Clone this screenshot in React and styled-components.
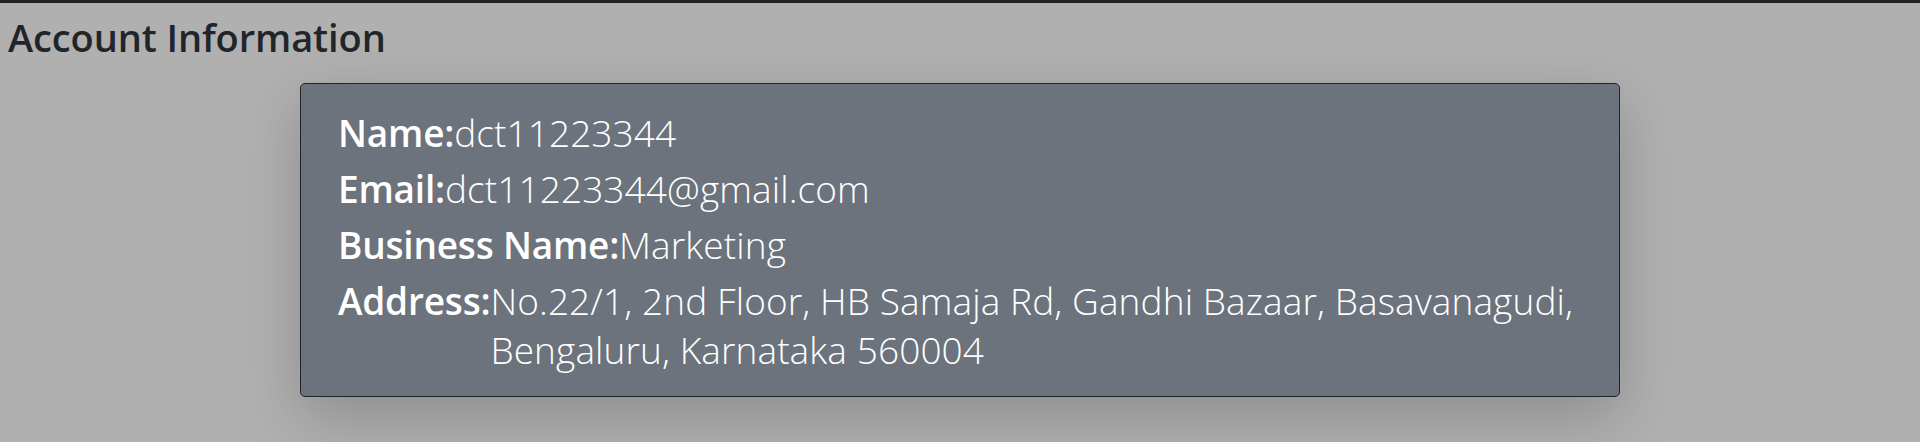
import styled, { createGlobalStyle } from "styled-components";

const GlobalStyle = createGlobalStyle`
  html, body {
    margin: 0;
    padding: 0;
    background: #b0b0b0;
    font-family: "Open Sans", "Noto Sans", sans-serif;
  }
`;

const Page = styled.div`
  min-height: 442px;
  background: #b0b0b0;
`;

const TopBar = styled.div`
  height: 3px;
  background: #212529;
`;

const Title = styled.h2`
  margin: 10px 0 0;
  padding-left: 8px;
  font-size: 38px;
  font-weight: 600;
  line-height: 48px;
  color: #212529;
  letter-spacing: -0.1px;
`;

const Card = styled.div`
  box-sizing: border-box;
  width: 1320px;
  margin: 22px auto 0;
  padding: 24px 37px 22px;
  background: #6c737c;
  border: 1px solid #212529;
  border-radius: 5px;
  box-shadow: 0 20px 60px rgba(0, 0, 0, 0.2);
  color: #fff;
`;

const Row = styled.div`
  display: flex;
  font-size: 37px;
  line-height: 49px;
  margin-bottom: 7px;

  &:last-child {
    margin-bottom: 0;
  }
`;

const Label = styled.span`
  flex: none;
  font-weight: 600;
  letter-spacing: -0.2px;
`;

const Value = styled.span`
  font-weight: 300;
  letter-spacing: 0.1px;
`;

const fields = [
  { label: "Name:", value: "dct11223344" },
  { label: "Email:", value: "dct11223344@gmail.com" },
  { label: "Business Name:", value: "Marketing" },
  {
    label: "Address:",
    value:
      "No.22/1, 2nd Floor, HB Samaja Rd, Gandhi Bazaar, Basavanagudi, Bengaluru, Karnataka 560004",
  },
];

function App() {
  return (
    <Page>
      <GlobalStyle />
      <TopBar />
      <Title>Account Information</Title>
      <Card>
        {fields.map((f) => (
          <Row key={f.label}>
            <Label>{f.label}</Label>
            <Value>{f.value}</Value>
          </Row>
        ))}
      </Card>
    </Page>
  );
}

export default App;
